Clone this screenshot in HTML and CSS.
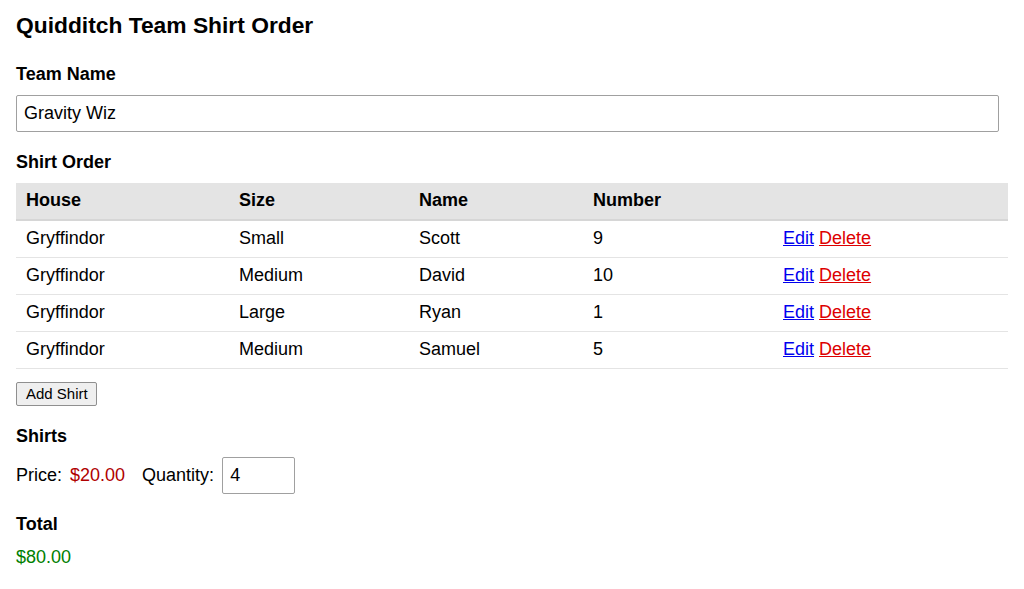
FILE: index.html
```html
<!DOCTYPE html>
<html>
<head>
<meta charset="utf-8">
<link rel="stylesheet" href="styles.css">
</head>
<body>
<div class="page">
  <h1 class="title">Quidditch Team Shirt Order</h1>

  <label class="section-label team-label">Team Name</label>
  <input class="team-input" type="text" value="Gravity Wiz">

  <h2 class="section-label order-label">Shirt Order</h2>
  <table class="order-table">
    <thead>
      <tr>
        <th class="c-house">House</th>
        <th class="c-size">Size</th>
        <th class="c-name">Name</th>
        <th class="c-num">Number</th>
        <th class="c-act"></th>
      </tr>
    </thead>
    <tbody>
      <tr><td>Gryffindor</td><td>Small</td><td>Scott</td><td>9</td><td><a class="edit" href="#">Edit</a> <a class="del" href="#">Delete</a></td></tr>
      <tr><td>Gryffindor</td><td>Medium</td><td>David</td><td>10</td><td><a class="edit" href="#">Edit</a> <a class="del" href="#">Delete</a></td></tr>
      <tr><td>Gryffindor</td><td>Large</td><td>Ryan</td><td>1</td><td><a class="edit" href="#">Edit</a> <a class="del" href="#">Delete</a></td></tr>
      <tr><td>Gryffindor</td><td>Medium</td><td>Samuel</td><td>5</td><td><a class="edit" href="#">Edit</a> <a class="del" href="#">Delete</a></td></tr>
    </tbody>
  </table>
  <button class="add-btn" type="button">Add Shirt</button>

  <h2 class="section-label shirts-label">Shirts</h2>
  <div class="price-row">
    <span>Price:</span>
    <span class="price">$20.00</span>
    <span class="qty-label">Quantity:</span>
    <input class="qty-input" type="text" value="4">
  </div>

  <h2 class="section-label total-label">Total</h2>
  <div class="total">$80.00</div>
</div>
</body>
</html>
```

FILE: styles.css
```css
html, body {
  margin: 0;
  padding: 0;
  background: #fff;
}
body {
  font-family: "Liberation Sans", Arial, sans-serif;
  font-size: 18px;
  line-height: 21px;
  color: #000;
}
.page {
  padding: 12px 16px 0 16px;
  display: flex;
  flex-direction: column;
  align-items: flex-start;
}
.title {
  font-size: 22.8px;
  line-height: 26px;
  font-weight: bold;
  margin: 0;
}
.section-label {
  display: block;
  font-size: 18px;
  line-height: 21px;
  font-weight: bold;
  margin: 0;
}
.team-label { margin-top: 26px; }
.team-input {
  margin-top: 10px;
  box-sizing: border-box;
  width: 983px;
  height: 37px;
  border: 1px solid #a0a0a0;
  border-radius: 2px;
  padding: 0 7px;
  font-family: "Liberation Sans", Arial, sans-serif;
  font-size: 18px;
  color: #000;
}
.order-label { margin-top: 20px; }
.order-table {
  margin-top: 10px;
  width: 992px;
  border-collapse: collapse;
  table-layout: fixed;
}
.order-table th,
.order-table td {
  text-align: left;
  line-height: 21px;
  padding-left: 10px;
  padding-right: 10px;
}
.order-table th {
  background: #e4e4e4;
  font-weight: bold;
  padding-top: 7px;
  padding-bottom: 8px;
  border-bottom: 2px solid #d6d6d6;
}
.order-table td {
  padding-top: 7px;
  padding-bottom: 8px;
  border-bottom: 1px solid #e4e4e4;
}
.c-house { width: 193px; }
.c-size { width: 160px; }
.c-name { width: 154px; }
.c-num { width: 170px; }
.edit { color: #0000ee; }
.del { color: #dd0000; }
.add-btn {
  margin-top: 13px;
  font-family: "Liberation Sans", Arial, sans-serif;
  font-size: 15px;
  line-height: 18px;
  padding: 1px 8px 1px 9px;
  background: #efefef;
  border: 1px solid #8f8f8f;
  border-radius: 2px;
  color: #000;
  height: 24px;
  box-sizing: border-box;
}
.shirts-label { margin-top: 20px; }
.price-row {
  margin-top: 10px;
  display: flex;
  align-items: center;
}
.price { color: #b00000; margin-left: 8px; }
.qty-label { margin-left: 17px; }
.qty-input {
  margin-left: 8px;
  box-sizing: border-box;
  width: 73px;
  height: 37px;
  border: 1px solid #a0a0a0;
  border-radius: 2px;
  padding: 0 7px;
  font-family: "Liberation Sans", Arial, sans-serif;
  font-size: 18px;
  color: #000;
}
.total-label { margin-top: 20px; }
.total {
  margin-top: 12px;
  color: #008000;
}
```
